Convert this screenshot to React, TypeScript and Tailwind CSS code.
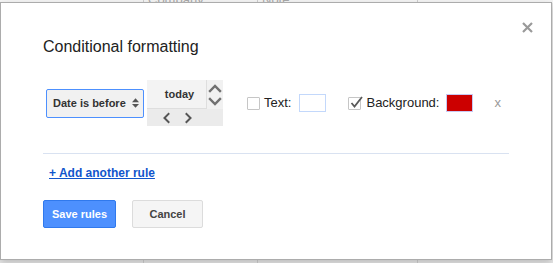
import React from 'react';

function Chevron({ dir, className }: { dir: 'up' | 'down' | 'left' | 'right'; className?: string }): React.ReactElement {
  const pts = {
    up: '2,8 7,3 12,8',
    down: '2,3 7,8 12,3',
    left: '8,2 3,7 8,12',
    right: '3,2 8,7 3,12',
  }[dir];
  const box = dir === 'up' || dir === 'down' ? '0 0 14 11' : '0 0 11 14';
  return (
    <svg viewBox={box} className={className} fill="none">
      <polyline points={pts} stroke="currentColor" strokeWidth="2.4" strokeLinecap="square" />
    </svg>
  );
}

function Checkbox({ checked }: { checked?: boolean }): React.ReactElement {
  return (
    <span className="relative inline-block h-[13px] w-[13px] shrink-0 rounded-[1px] border border-[#c6c6c6] bg-white">
      {checked && (
        <svg viewBox="0 0 15 15" className="absolute left-[0px] top-[-3px] h-[15px] w-[15px]" fill="none">
          <polyline points="2.5,8 5.5,11.5 13,2" stroke="#5a5a5a" strokeWidth="1.8" />
        </svg>
      )}
    </span>
  );
}

export default function App(): React.ReactElement {
  return (
    <div className="relative h-[263px] w-[553px] overflow-hidden bg-[#e9e9e9] font-['Liberation_Sans',Arial,sans-serif]">
      {/* spreadsheet behind the dialog */}
      <div className="absolute left-0 top-0 h-[3px] w-full bg-[#f6f6f6]" />
      <span className="absolute left-[148px] top-[-10px] text-[13px] text-[#aaa]">Company</span>
      <span className="absolute left-[262px] top-[-10px] text-[13px] text-[#aaa]">Note</span>
      <div className="absolute left-[143px] top-0 h-full w-px bg-[#cfcfcf]" />
      <div className="absolute left-[257px] top-0 h-full w-px bg-[#cfcfcf]" />
      <div className="absolute left-[417px] top-0 h-full w-px bg-[#cfcfcf]" />

      {/* dialog */}
      <div className="absolute left-0 top-[2px] h-[258px] w-[552px] border border-[#acacac] bg-white pl-[42px] pt-[34px] shadow-[0_3px_8px_rgba(0,0,0,0.2)]">
        <span className="absolute right-[18px] top-[19px] text-[#9a9a9a]">
          <svg viewBox="0 0 11 11" className="h-[11px] w-[11px]" fill="none">
            <path d="M1 1L10 10M10 1L1 10" stroke="currentColor" strokeWidth="2.2" />
          </svg>
        </span>

        <h1 className="h-[20px] text-[16px] leading-[20px] text-[#222]">Conditional formatting</h1>

        <div className="mt-[23px] flex h-[46px] items-center">
          <div className="ml-[3px] flex h-[29px] w-[98px] items-center rounded-[2px] border border-[#4d90fe] bg-[#f1f1f1] pl-[6px] text-[11px] font-bold text-[#333]">
            <span>Date is before</span>
            <svg viewBox="0 0 8 11" className="ml-[6px] h-[10px] w-[7px]">
              <polygon points="0,4.5 4,0 8,4.5" fill="#555" />
              <polygon points="0,6.5 4,11 8,6.5" fill="#555" />
            </svg>
          </div>

          <div className="ml-[3px] flex h-[46px] w-[76px] flex-col bg-[#ebebeb]">
            <div className="flex h-[29px]">
              <div className="flex w-[60px] items-center justify-center border-b border-r border-[#dedede] bg-[#f3f3f3] pl-[6px] text-[11px] font-bold text-[#333]">
                today
              </div>
              <div className="flex flex-1 flex-col items-center justify-center gap-[2px] bg-[#f1f1f1] text-[#707070]">
                <Chevron dir="up" className="h-[11px] w-[14px]" />
                <Chevron dir="down" className="h-[11px] w-[14px]" />
              </div>
            </div>
            <div className="flex flex-1 items-center gap-[13px] pl-[15px] text-[#555]">
              <Chevron dir="left" className="h-[12px] w-[9px]" />
              <Chevron dir="right" className="h-[12px] w-[9px]" />
            </div>
          </div>

          <div className="ml-[24px] flex items-center text-[13px] text-[#222]">
            <Checkbox />
            <span className="ml-[4px]">Text:</span>
            <span className="ml-[8px] h-[18px] w-[27px] border border-[#c3d8fb] bg-white" />
          </div>

          <div className="ml-[22px] flex items-center text-[13px] text-[#222]">
            <Checkbox checked />
            <span className="ml-[5px]">Background:</span>
            <span className="ml-[7px] h-[18px] w-[27px] border border-[#c8c8f2] bg-[#cc0000]" />
          </div>

          <span className="ml-[21px] text-[13px] text-[#999]">x</span>
        </div>

        <div className="mt-[27px] h-px w-[466px] bg-[#d9e2f1]" />

        <a href="#" className="ml-[6px] mt-[11px] block w-fit text-[12px] font-bold leading-[16px] text-[#1155cc] underline">
          + Add another rule
        </a>

        <div className="mt-[19px] flex gap-[16px]">
          <button className="h-[28px] w-[73px] rounded-[2px] border border-[#3079ed] bg-[#4d90fe] text-[11px] font-bold text-white">
            Save rules
          </button>
          <button className="h-[28px] w-[71px] rounded-[2px] border border-[#dcdcdc] bg-[#f5f5f5] text-[11px] font-bold text-[#444]">
            Cancel
          </button>
        </div>
      </div>
    </div>
  );
}
